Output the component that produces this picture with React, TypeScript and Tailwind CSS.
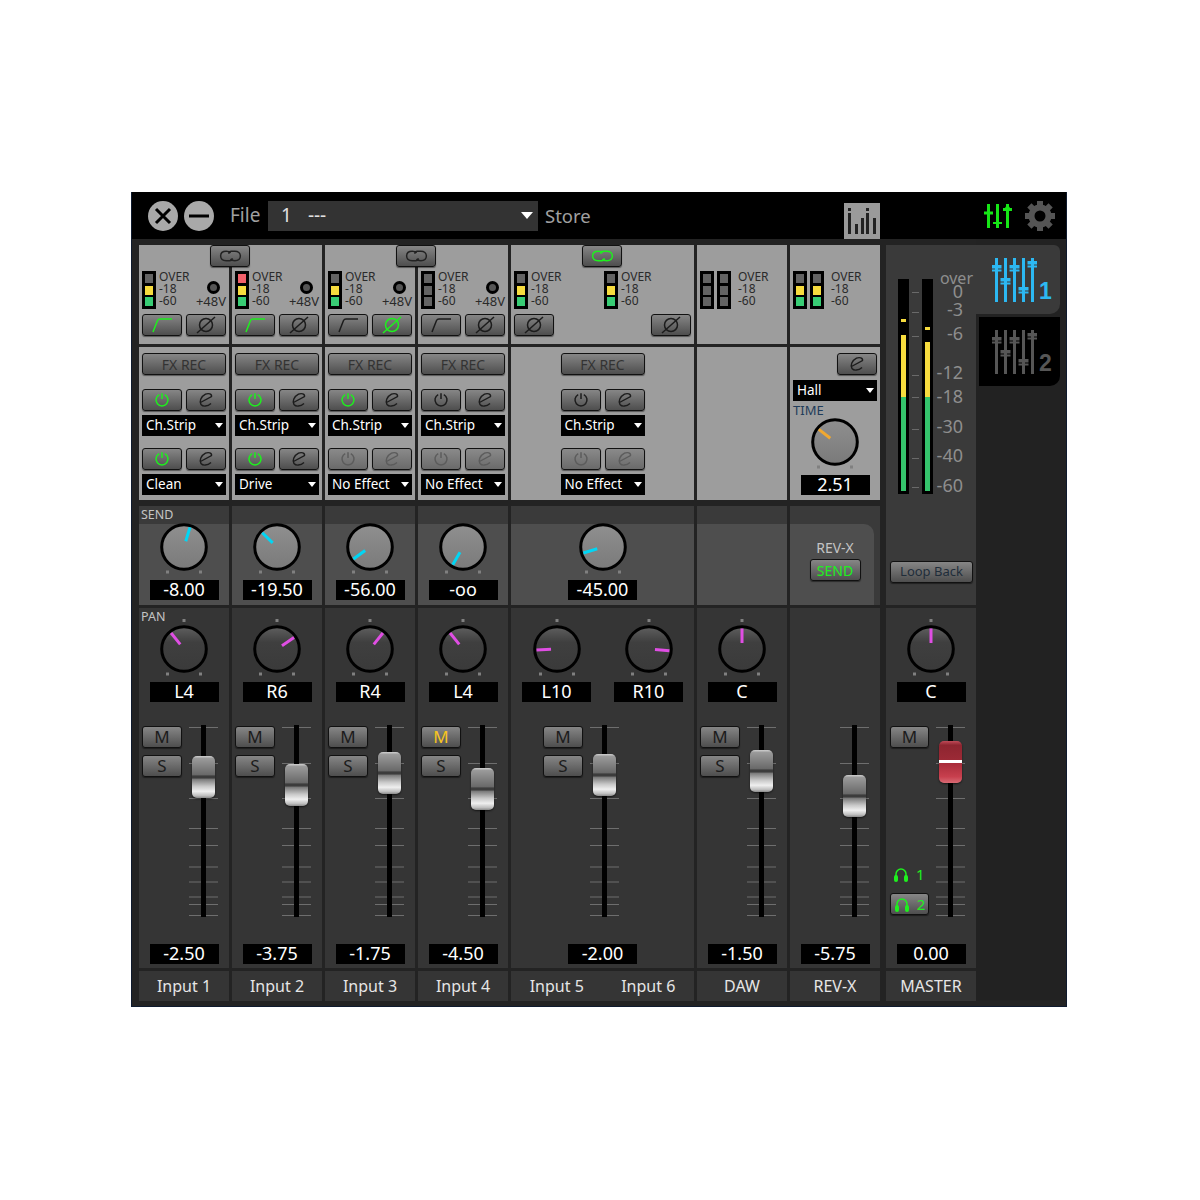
import { ReactNode, useId } from 'react';

const FONT = "font-['Noto_Sans','Open_Sans',sans-serif]";
const ROW = 'grid grid-cols-[90px_90px_90px_90px_183px_90px_90px] gap-x-[3px]';
const GREEN = '#1ef01e';
const ICON = '#1c1c1c';
const DIM = '#5c5c5c';

function Btn({ w = 40, dim, children, className = '' }: { w?: number; dim?: boolean; children?: ReactNode; className?: string }) {
  return (
    <div
      style={{ width: w }}
      className={`h-[22px] shrink-0 flex items-center justify-center rounded-[3px] border border-[#111] shadow-[0_1px_1px_rgba(0,0,0,0.45)] ${
        dim
          ? 'bg-[linear-gradient(180deg,#8a8a8a,#6a6a6a)]'
          : 'bg-[linear-gradient(180deg,#868686,#4e4e4e)]'
      } ${className}`}
    >
      {children}
    </div>
  );
}

function PhaseIcon({ color = ICON }: { color?: string }) {
  return (
    <svg width="24" height="20" viewBox="0 0 24 20" fill="none" stroke={color} strokeWidth="1.5">
      <circle cx="12" cy="10" r="6.5" />
      <path d="M3 18 21 2" />
    </svg>
  );
}

function HpfIcon({ color = ICON }: { color?: string }) {
  return (
    <svg width="24" height="18" viewBox="0 0 24 18" fill="none" stroke={color} strokeWidth="1.5">
      <path d="M3 16 7.5 4.5C8 3.5 8.5 3 10 3H22" />
    </svg>
  );
}

function PowerIcon({ color = ICON }: { color?: string }) {
  return (
    <svg width="16" height="16" viewBox="0 0 16 16" fill="none" stroke={color} strokeWidth="1.5">
      <path d="M5.2 2.6a6 6 0 1 0 5.6 0" />
      <path d="M8 1.2V7" />
    </svg>
  );
}

function EditIcon({ color = ICON }: { color?: string }) {
  return (
    <svg width="16" height="16" viewBox="0 0 16 16" fill="none" stroke={color} strokeWidth="1.4">
      <path d="M2.5 10.5 13.5 4.5C14 2 10.500 .8 7.500 2.200 3 4.500 1 9.500 3 12.500 5 15 9.500 14.500 13 11.500" />
    </svg>
  );
}

function LinkIcon({ color = '#222' }: { color?: string }) {
  return (
    <svg width="23" height="12" viewBox="0 0 26 14" fill="none" stroke={color} strokeWidth="1.7">
      <path d="M13 3.500C12 2 10.500 1.500 8 1.500 4 1.500 1.500 3.500 1.500 7S4 12.500 8 12.500H12C14 12.500 15 11 15 9.500" />
      <path d="M13 10.500C14 12 15.500 12.500 18 12.500 22 12.500 24.500 10.500 24.500 7S22 1.500 18 1.500H14C12 1.500 11 3 11 4.500" />
    </svg>
  );
}

function Led({ tone, color }: { tone: boolean; color: string }) {
  return <div style={{ backgroundColor: tone ? color : '#636363' }} className="w-[8px] h-[9px]" />;
}

function ClipMeter({ over, mid = true, low = true }: { over?: boolean; mid?: boolean; low?: boolean }) {
  return (
    <div className="w-[14px] h-[38px] bg-black flex flex-col items-center justify-between py-[3px] shrink-0">
      <Led tone={!!over} color="#f2606a" />
      <Led tone={mid} color="#f7dc3e" />
      <Led tone={low} color="#38cc74" />
    </div>
  );
}

function ClipLabels({ className = '' }: { className?: string }) {
  return (
    <div className={`text-[12px] leading-[12px] text-[#2a2a2a] ${className}`}>
      <div>OVER</div>
      <div>-18</div>
      <div>-60</div>
    </div>
  );
}

type TopProps = { over?: boolean; hpf?: boolean; phase?: boolean; mid?: boolean; low?: boolean };

function InputTop({ over, hpf, phase, mid = true, low = true }: TopProps) {
  return (
    <div className="h-[99px] bg-[#9d9d9d] px-[3px] pt-[26px]">
      <div className="flex">
        <ClipMeter over={over} mid={mid} low={low} />
        <ClipLabels className="ml-[3px]" />
        <div className="ml-auto flex flex-col items-center pt-[10px] text-[13px] leading-[12px] text-[#2a2a2a]">
          <div className="w-[13px] h-[13px] ml-[6px] mb-[1px] rounded-full border-[3px] border-black bg-[#555]" />
          <div>+48V</div>
        </div>
      </div>
      <div className="flex gap-x-[4px] mt-[5px]">
        <Btn>
          <HpfIcon color={hpf ? GREEN : ICON} />
        </Btn>
        <Btn>
          <PhaseIcon color={phase ? GREEN : ICON} />
        </Btn>
      </div>
    </div>
  );
}

function Select({ label, w = 84, className = '' }: { label: string; w?: number; className?: string }) {
  return (
    <div style={{ width: w }} className={`h-[21px] bg-black flex items-center justify-between pl-[4px] pr-[3px] text-white text-[13.5px] ${className}`}>
      <span>{label}</span>
      <span className="w-0 h-0 border-x-[4px] border-x-transparent border-t-[5px] border-t-white" />
    </div>
  );
}

function FxPair({ on, off, className = '' }: { on?: boolean; off?: boolean; className?: string }) {
  return (
    <div className={`flex gap-x-[4px] ${className}`}>
      <Btn dim={off}>
        <PowerIcon color={on ? GREEN : off ? DIM : ICON} />
      </Btn>
      <Btn dim={off}>
        <EditIcon color={off ? DIM : ICON} />
      </Btn>
    </div>
  );
}

function FxCell({ on1, on2, fx, off2, center }: { on1?: boolean; on2?: boolean; fx: string; off2?: boolean; center?: boolean }) {
  return (
    <div className={`h-[153px] bg-[#9d9d9d] pt-[6px] flex flex-col ${center ? 'items-center' : 'pl-[3px]'}`}>
      <Btn w={84} className="text-[14px] text-[#333]">FX REC</Btn>
      <FxPair on={on1} className="mt-[14px]" />
      <Select label="Ch.Strip" className="mt-[4px]" />
      <FxPair on={on2} off={off2} className="mt-[12px]" />
      <Select label={fx} className="mt-[4px]" />
    </div>
  );
}

function Knob({ angle, color, dark, top }: { angle: number; color: string; dark?: boolean; top?: boolean }) {
  const id = useId();
  return (
    <svg width="64" height="64" viewBox="0 0 64 64" className="shrink-0">
      <defs>
        <linearGradient id={id} x1="0" y1="0" x2="0" y2="1">
          {dark ? (
            <>
              <stop offset="0" stopColor="#5f5f5f" />
              <stop offset="0.35" stopColor="#3f3f3f" />
              <stop offset="1" stopColor="#3a3a3a" />
            </>
          ) : (
            <>
              <stop offset="0" stopColor="#8f8f8f" />
              <stop offset="1" stopColor="#7a7a7a" />
            </>
          )}
        </linearGradient>
      </defs>
      {top && <rect x="30.500" y="2" width="3" height="3" fill="#808080" />}
      <rect x="14" y="55.500" width="3" height="3" fill="#808080" />
      <rect x="47" y="55.500" width="3" height="3" fill="#808080" />
      <circle cx="32" cy="33" r="22.500" fill="rgba(0,0,0,0.3)" />
      <circle cx="32" cy="32" r="22.300" fill={`url(#${id})`} stroke="#000" strokeWidth="3" />
      <g transform={`rotate(${angle} 32 32)`}>
        <path d="M32 26V11.500" stroke={color} strokeWidth="3" />
      </g>
    </svg>
  );
}

function ValueBox({ children, className = '' }: { children: ReactNode; className?: string }) {
  return <div className={`w-[69px] h-[20px] bg-black text-white text-[18px] leading-[19px] text-center ${className}`}>{children}</div>;
}

function SendCell({ angle, value, label, children, rounded }: { angle?: number; value?: string; label?: string; children?: ReactNode; rounded?: boolean }) {
  return (
    <div className="h-[99px] bg-[#3a3a3a] pt-[18px]">
      {label && <div className="h-0 -mt-[17px] mb-[17px] pl-[2px] text-[#c4c4c4] text-[12.5px] leading-[16px]">{label}</div>}
      <div className={`h-[81px] bg-[#4e4e4e] flex flex-col items-center ${rounded ? 'mr-[6px] rounded-tr-[10px] pl-[6px]' : ''}`}>
        {angle !== undefined && (
          <>
            <div className="-mt-[9px]">
              <Knob angle={angle} color="#00d6f5" />
            </div>
            <ValueBox className="mt-[1px]">{value}</ValueBox>
          </>
        )}
        {children}
      </div>
    </div>
  );
}

const TICKS = [2, 38, 73, 103, 120, 141.5, 156.5, 171.5, 179, 190];

function Fader({ top, red }: { top: number; red?: boolean }) {
  return (
    <div className="relative w-[29px] h-[192px] shrink-0">
      <svg width="29" height="192" viewBox="0 0 29 192">
        {TICKS.map((y) => (
          <rect key={y} x="0" y={y} width="29" height="1" fill="#6e6e6e" />
        ))}
        <rect x="12" y="0" width="5" height="192" fill="#000" />
      </svg>
      <div
        style={{ top }}
        className={`absolute left-[3px] w-[23px] h-[42px] rounded-[5px] shadow-[0_1px_2px_rgba(0,0,0,0.6)] ${
          red
            ? 'bg-[linear-gradient(180deg,#c04a58_0%,#8e2530_10%,#9c2a36_46%,#ffffff_46%,#ffffff_53%,#a82c3a_53%,#c8404e_85%,#d86a74_100%)]'
            : 'bg-[linear-gradient(180deg,#d0d0d0_0%,#9a9a9a_6%,#6a6a6a_44%,#3c3c3c_48%,#3c3c3c_52%,#7e7e7e_56%,#c8c8c8_72%,#efefef_84%,#c0c0c0_94%,#8a8a8a_100%)]'
        }`}
      />
    </div>
  );
}

function Mute({ label, active, w }: { label: string; active?: boolean; w?: number }) {
  return (
    <Btn w={w} className={`text-[17px] ${active ? 'text-[#f7c41f]' : 'text-[#1c1c1c]'}`}>{label}</Btn>
  );
}

function ChannelFader({ top, pad = 3, noButtons, value }: { top: number; pad?: number; noButtons?: boolean; value: string }) {
  return (
    <>
      <div style={{ paddingLeft: pad }} className="flex self-stretch gap-x-[7px] mt-[23px]">
        <div className={`w-[40px] pt-[1px] flex flex-col gap-y-[7px] ${noButtons ? 'invisible' : ''}`}>
          <Mute label="M" active={value === '-4.50'} />
          <Mute label="S" />
        </div>
        <Fader top={top} />
      </div>
      <ValueBox className="mt-[27px]">{value}</ValueBox>
    </>
  );
}

function Pan({ angle, value }: { angle: number; value: string }) {
  return (
    <div className="flex flex-col items-center">
      <Knob angle={angle} color="#e04ee4" dark top />
      <ValueBox className="mt-[1px]">{value}</ValueBox>
    </div>
  );
}

function StripCell({ label, children }: { label?: string; children: ReactNode }) {
  return (
    <div className="h-[360px] bg-[#353535] pt-[9px] flex flex-col items-center">
      {label && <div className="h-0 -mt-[9px] mb-[9px] self-start pl-[2px] text-[#c4c4c4] text-[12.5px] leading-[18px]">{label}</div>}
      {children}
    </div>
  );
}

function Name({ children }: { children: ReactNode }) {
  return <div className="flex-1 text-center text-[#e6e6e6] text-[16px] leading-[30px]">{children}</div>;
}

function NameCell({ names }: { names: string[] }) {
  return (
    <div className="h-[30px] bg-[#353535] flex">
      {names.map((n) => (
        <Name key={n}>{n}</Name>
      ))}
    </div>
  );
}

function MixerIcon({ color, num }: { color: string; num: string }) {
  const lines = [
    { x: 3, y: 7 },
    { x: 12, y: 20 },
    { x: 21, y: 7 },
    { x: 30, y: 29 },
    { x: 39, y: 3 },
  ];
  return (
    <div className="flex items-end">
      <svg width="45" height="44" viewBox="0 0 45 44" fill={color}>
        {lines.map((l) => (
          <g key={l.x}>
            <rect x={l.x} y="0" width="3" height="44" />
            <rect x={l.x - 3.5} y={l.y} width="10" height="3.500" />
            <rect x={l.x - 3.5} y={l.y + 4.5} width="10" height="2" />
          </g>
        ))}
      </svg>
      <span style={{ color }} className="ml-[2px] text-[23px] leading-[22px] font-bold font-['Liberation_Sans',sans-serif]">{num}</span>
    </div>
  );
}

function LevelMeter() {
  const ticks = [13, 33, 57, 96, 118, 150, 179, 208];
  const bar = (x: number, peak: number, yellow: number) => (
    <g key={x}>
      <rect x={x} y="0" width="11" height="215" fill="#000" />
      <rect x={x + 3} y={peak} width="5" height="3" fill="#f7dc3e" />
      <rect x={x + 3} y={yellow} width="5" height={118 - yellow} fill="#f7dc3e" />
      <rect x={x + 3} y="118" width="5" height="94" fill="#35c46c" />
    </g>
  );
  return (
    <svg width="35" height="215" viewBox="0 0 35 215" className="shrink-0">
      {bar(0, 40, 56)}
      {bar(24, 48, 63)}
      {ticks.map((y) => (
        <rect key={y} x="14" y={y} width="7" height="1" fill="#6a6a6a" />
      ))}
    </svg>
  );
}

const SCALE = [
  { label: '0', h: 18 },
  { label: '-3', h: 24 },
  { label: '-6', h: 39 },
  { label: '-12', h: 24 },
  { label: '-18', h: 30 },
  { label: '-30', h: 29 },
  { label: '-40', h: 30 },
  { label: '-60', h: 16 },
];

function Headphones({ color = GREEN }: { color?: string }) {
  return (
    <svg width="16" height="15" viewBox="0 0 16 15" fill="none">
      <path d="M3 10V7a5 5 0 0 1 10 0v3" stroke={color} strokeWidth="1.500" />
      <rect x="1" y="8" width="4" height="7" rx="2" fill={color} />
      <rect x="11" y="8" width="4" height="7" rx="2" fill={color} />
    </svg>
  );
}

function Gear() {
  const teeth = [0, 45, 90, 135, 180, 225, 270, 315];
  return (
    <svg width="30" height="30" viewBox="0 0 30 30" fill="#555">
      {teeth.map((a) => (
        <rect key={a} x="12" y="0" width="6" height="6" transform={`rotate(${a} 15 15)`} />
      ))}
      <circle cx="15" cy="15" r="8.500" fill="none" stroke="#555" strokeWidth="6" />
    </svg>
  );
}

export default function App() {
  return (
    <div className={`min-h-screen bg-white pt-[192px] pl-[131px] ${FONT}`}>
      <div className="w-[936px] h-[815px] bg-[#232323] border-x border-[#0e1a2e] border-b-[#0e1a2e] border-b">
        {/* Title bar */}
        <div className="h-[47px] bg-black flex items-center pl-[16px]">
          <svg width="30" height="30" viewBox="0 0 30 30" className="shrink-0">
            <circle cx="15" cy="15" r="15" fill="#a9a9a9" />
            <path d="M8 8 22 22M22 8 8 22" stroke="#000" strokeWidth="3" />
          </svg>
          <svg width="30" height="30" viewBox="0 0 30 30" className="ml-[6px] shrink-0">
            <circle cx="15" cy="15" r="15" fill="#a9a9a9" />
            <path d="M5 15H25" stroke="#000" strokeWidth="3" />
          </svg>
          <span className="ml-[16px] w-[38px] text-[19px] text-[#a0a0a0]">File</span>
          <div className="w-[270px] h-[30px] bg-[#333] flex items-center pl-[13px] pr-[5px] text-[#e0e0e0] text-[19px] shrink-0">
            <span>1</span>
            <span className="ml-[16px]">---</span>
            <span className="ml-auto w-0 h-0 border-x-[6px] border-x-transparent border-t-[7px] border-t-white" />
          </div>
          <span className="ml-[7px] w-[46px] text-[18.5px] text-[#a0a0a0]">Store</span>
          <div className="ml-[253px] self-end w-[36px] h-[36px] bg-[#9a9a9a] shrink-0">
            <svg width="36" height="36" viewBox="0 0 36 36" fill="#222">
              <rect x="4" y="5" width="3" height="3" />
              <rect x="4" y="10" width="3" height="21" />
              <rect x="11" y="21" width="3" height="10" />
              <rect x="17" y="15" width="3" height="16" />
              <rect x="22" y="5" width="3" height="3" />
              <rect x="22" y="10" width="3" height="21" />
              <rect x="29" y="15" width="3" height="16" />
            </svg>
          </div>
          <svg width="30" height="26" viewBox="0 0 30 26" fill="#16e616" className="ml-[103px] shrink-0">
            <rect x="4" y="1" width="3" height="24" />
            <rect x="13" y="1" width="3" height="24" />
            <rect x="23" y="1" width="3" height="24" />
            <path d="M1 8.500H10V11.500H1ZM10 19H19V21H16L14.500 23 13 21H10ZM20 5H29V8H20ZM24.500 1 27 5H22Z" />
          </svg>
          <div className="ml-[12px]">
            <Gear />
          </div>
        </div>

        <div className="flex pt-[6px] pl-[7px]">
          {/* Channel strips */}
          <div className="w-[741px] flex flex-col">
            <div className={`${ROW} relative`}>
              <InputTop hpf />
              <InputTop over hpf />
              <InputTop phase />
              <InputTop mid={false} low={false} />
              <div className="h-[99px] bg-[#9d9d9d] px-[3px] pt-[26px]">
                <div className="flex">
                  <div className="flex flex-1">
                    <ClipMeter />
                    <ClipLabels className="ml-[3px]" />
                  </div>
                  <div className="flex flex-1 pl-[3px]">
                    <ClipMeter />
                    <ClipLabels className="ml-[3px]" />
                  </div>
                </div>
                <div className="flex justify-between mt-[5px]">
                  <Btn><PhaseIcon /></Btn>
                  <Btn><PhaseIcon /></Btn>
                </div>
              </div>
              <div className="h-[99px] bg-[#9d9d9d] px-[3px] pt-[26px] flex">
                <div className="flex gap-x-[3px]">
                  <ClipMeter mid={false} low={false} />
                  <ClipMeter mid={false} low={false} />
                </div>
                <ClipLabels className="ml-[7px]" />
              </div>
              <div className="h-[99px] bg-[#9d9d9d] px-[3px] pt-[26px] flex">
                <div className="flex gap-x-[3px]">
                  <ClipMeter />
                  <ClipMeter />
                </div>
                <ClipLabels className="ml-[7px]" />
              </div>
              <Btn className="absolute top-0 left-[71px]"><LinkIcon /></Btn>
              <Btn className="absolute top-0 left-[257px]"><LinkIcon /></Btn>
              <Btn className="absolute top-0 left-[443px]"><LinkIcon color={GREEN} /></Btn>
            </div>

            <div className={`${ROW} mt-[3px]`}>
              <FxCell on1 on2 fx="Clean" />
              <FxCell on1 on2 fx="Drive" />
              <FxCell on1 off2 fx="No Effect" />
              <FxCell off2 fx="No Effect" />
              <FxCell off2 fx="No Effect" center />
              <div className="h-[153px] bg-[#9d9d9d]" />
              <div className="h-[153px] bg-[#9d9d9d] pt-[6px] px-[3px] flex flex-col">
                <Btn className="self-end"><EditIcon /></Btn>
                <Select label="Hall" className="mt-[5px]" />
                <div className="h-0 text-[13px] leading-[18px] text-[#1f3c5a]">TIME</div>
                <div className="self-center mt-[9px]">
                  <Knob angle={-52} color="#f0a830" />
                </div>
                <ValueBox className="self-center mt-[1px]">2.51</ValueBox>
              </div>
            </div>

            <div className={`${ROW} mt-[6px]`}>
              <SendCell label="SEND" angle={17} value="-8.00" />
              <SendCell angle={-46} value="-19.50" />
              <SendCell angle={-126} value="-56.00" />
              <SendCell angle={-150} value="-oo" />
              <SendCell angle={-107} value="-45.00" />
              <SendCell />
              <SendCell rounded>
                <div className="mt-[15px] text-[14px] leading-[18px] text-[#c4c4c4]">REV-X</div>
                <Btn w={51} className="mt-[2px] text-[14px] text-[#1ef01e]">SEND</Btn>
              </SendCell>
            </div>

            <div className={`${ROW} mt-[3px]`}>
              <StripCell label="PAN">
                <Pan angle={-39} value="L4" />
                <ChannelFader top={31} value="-2.50" />
              </StripCell>
              <StripCell>
                <Pan angle={56} value="R6" />
                <ChannelFader top={39} value="-3.75" />
              </StripCell>
              <StripCell>
                <Pan angle={39} value="R4" />
                <ChannelFader top={27} value="-1.75" />
              </StripCell>
              <StripCell>
                <Pan angle={-39} value="L4" />
                <ChannelFader top={43} value="-4.50" />
              </StripCell>
              <StripCell>
                <div className="flex self-stretch justify-between px-[11px]">
                  <Pan angle={-93} value="L10" />
                  <Pan angle={95} value="R10" />
                </div>
                <ChannelFader top={29} pad={32} value="-2.00" />
              </StripCell>
              <StripCell>
                <Pan angle={0} value="C" />
                <ChannelFader top={25} value="-1.50" />
              </StripCell>
              <StripCell>
                <div className="h-[85px]" />
                <ChannelFader top={50} noButtons value="-5.75" />
              </StripCell>
            </div>

            <div className={`${ROW} mt-[3px]`}>
              <NameCell names={['Input 1']} />
              <NameCell names={['Input 2']} />
              <NameCell names={['Input 3']} />
              <NameCell names={['Input 4']} />
              <NameCell names={['Input 5', 'Input 6']} />
              <NameCell names={['DAW']} />
              <NameCell names={['REV-X']} />
            </div>
          </div>

          {/* Master */}
          <div className="ml-[6px] w-[90px] flex flex-col">
            <div className="h-[360px] bg-[#3a3a3a] pt-[34px] pl-[12px] flex flex-col">
              <div className="flex items-start">
                <LevelMeter />
                <div className="-mt-[10px] flex-1 flex flex-col items-end text-[#8e8e8e] text-[18px] leading-[18px]">
                  <div className="h-[13px] text-[16px] pr-[3px]">over</div>
                  {SCALE.map((s) => (
                    <div key={s.label} style={{ height: s.h }} className="pr-[13px]">{s.label}</div>
                  ))}
                </div>
              </div>
              <Btn w={83} className="-ml-[8px] mt-[67px] text-[13px] text-[#1f2d3a]">Loop Back</Btn>
            </div>
            <div className="mt-[3px] h-[360px] bg-[#353535] pt-[9px] flex flex-col items-center">
              <Pan angle={0} value="C" />
              <div className="flex self-stretch gap-x-[7px] pl-[4px] mt-[23px]">
                <div className="w-[39px] h-[192px] pt-[1px] flex flex-col items-stretch">
                  <Mute label="M" w={39} />
                  <div className="mt-auto mb-[11px] flex items-center pl-[3px] gap-x-[7px] text-[15px] leading-[16px] text-[#1ef01e]">
                    <Headphones />
                    <span>1</span>
                  </div>
                  <Btn w={39} className="mb-[2px] gap-x-[7px] text-[15px] text-[#1ef01e]">
                    <Headphones />
                    <span>2</span>
                  </Btn>
                </div>
                <Fader top={16} red />
              </div>
              <ValueBox className="mt-[27px]">0.00</ValueBox>
            </div>
            <div className="mt-[3px]">
              <NameCell names={['MASTER']} />
            </div>
          </div>

          {/* Page tabs */}
          <div className="w-[90px] -mt-[6px] pt-[6px] bg-[#222] flex flex-col">
            <div className="w-[84px] h-[69px] bg-[#3a3a3a] rounded-tr-[6px] rounded-br-[10px] flex items-center pl-[16px]">
              <MixerIcon color="#2cb8f2" num="1" />
            </div>
            <div className="mt-[3px] ml-[3px] w-[81px] h-[69px] bg-black rounded-br-[10px] flex items-center pl-[13px]">
              <MixerIcon color="#565656" num="2" />
            </div>
          </div>
        </div>
      </div>
    </div>
  );
}
